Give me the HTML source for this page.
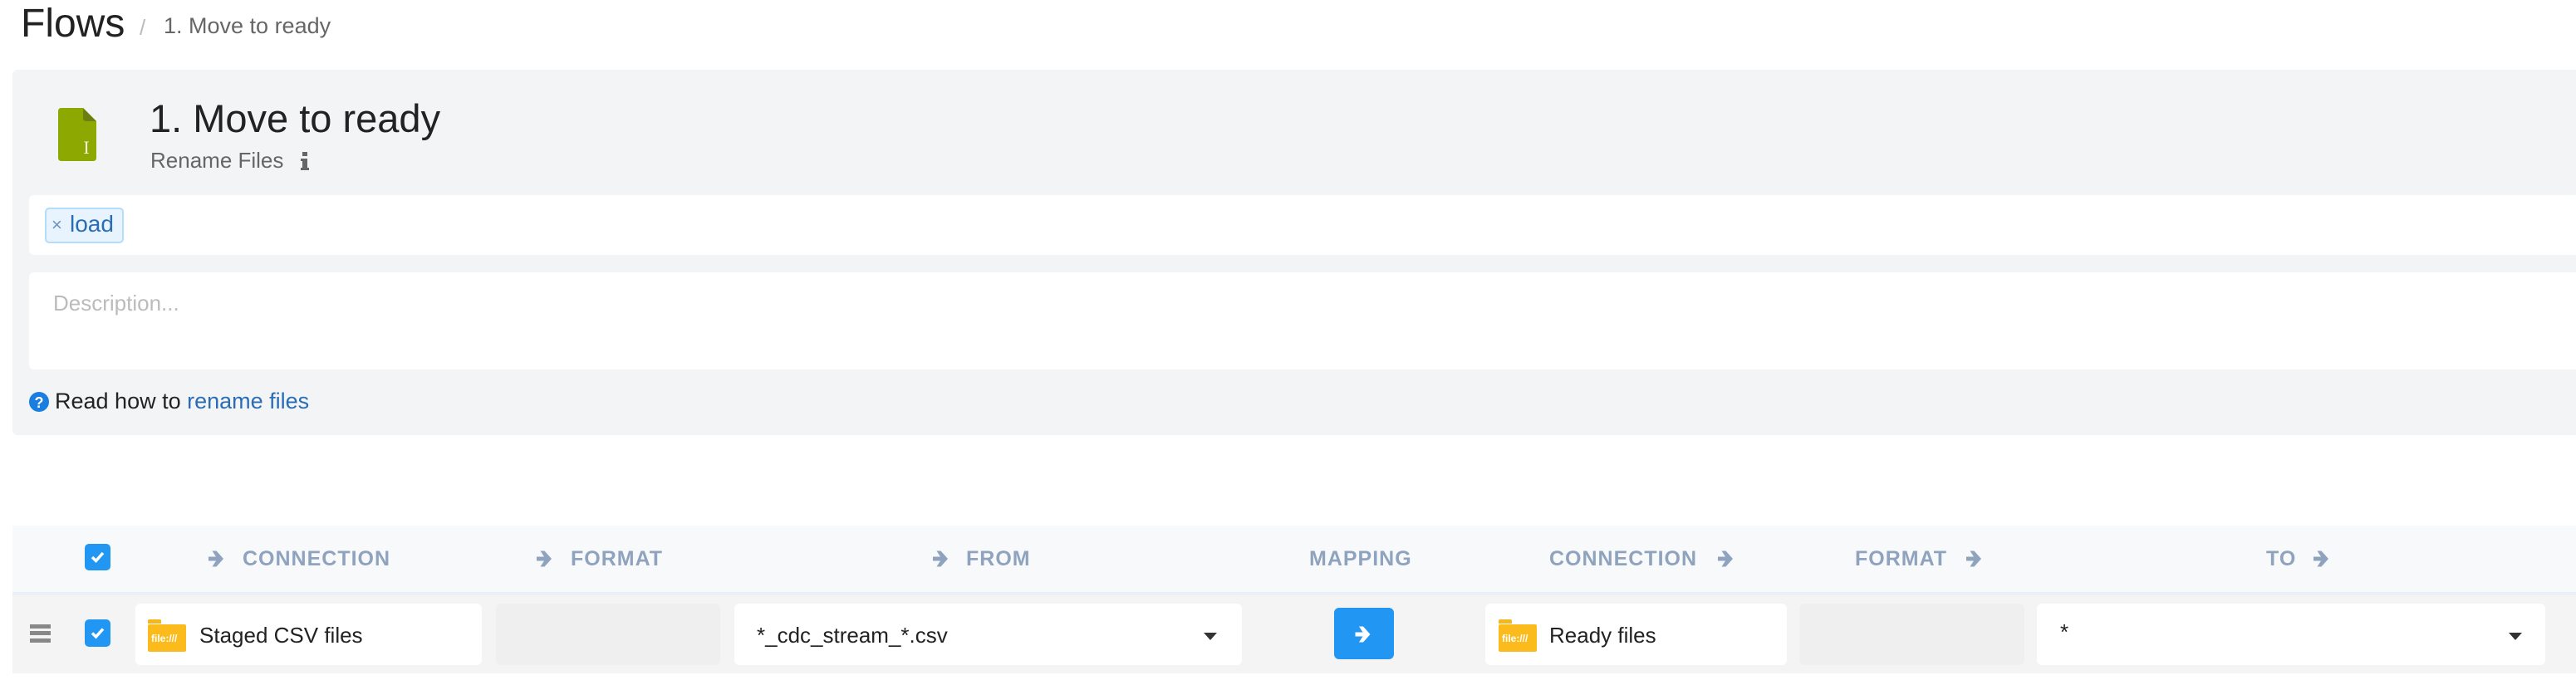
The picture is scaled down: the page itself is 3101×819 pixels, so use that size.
<!DOCTYPE html>
<html><head><meta charset="utf-8"><style>
*{margin:0;padding:0;box-sizing:border-box}
body{width:3101px;height:819px;overflow:hidden;background:#fff;font-family:"Liberation Sans",Arial,sans-serif;position:relative}
.a{position:absolute;white-space:nowrap}
.hd{font-weight:bold;font-size:25px;color:#8fa3bf;letter-spacing:1px;top:659px}
.box{position:absolute;background:#fff;border-radius:6px}
.gbox{position:absolute;background:#efefef;border-radius:6px}
</style></head><body>
<div class="a" style="left:25px;top:1px;font-size:48px;color:#222">Flows</div>
<div class="a" style="left:168px;top:18px;font-size:26px;color:#bbb">/</div>
<div class="a" style="left:197px;top:16px;font-size:27px;color:#666">1. Move to ready</div>

<div style="position:absolute;left:15px;top:84px;width:3086px;height:440px;background:#f3f4f6;border-radius:6px 0 0 6px"></div>
<svg class="a" style="left:70px;top:130px" width="46" height="64" viewBox="0 0 46 64">
<path d="M4 0H30L46 16V60Q46 64 42 64H4Q0 64 0 60V4Q0 0 4 0Z" fill="#8da800"/>
<path d="M30 0L46 16H34Q30 16 30 12Z" fill="#6a7e12"/>
<text x="34" y="55" font-family="Liberation Serif,serif" font-size="22" fill="#f3f7de" text-anchor="middle">I</text>
</svg>
<div class="a" style="left:180px;top:115px;font-size:47px;color:#222">1. Move to ready</div>
<div class="a" style="left:181px;top:178px;font-size:26px;color:#666">Rename Files</div>
<svg class="a" style="left:361px;top:183px" width="12" height="22" viewBox="0 0 12 22"><rect x="3" y="0" width="6" height="5" fill="#666"/><path d="M1 8H9V19H11V22H1V19H3V11H1Z" fill="#666"/></svg>

<div class="box" style="left:35px;top:235px;width:3066px;height:72px;border-radius:6px 0 0 6px"></div>
<div class="a" style="left:54px;top:250px;width:95px;height:43px;background:#e8f4fd;border:2px solid #b5dcf8;border-radius:5px"></div>
<div class="a" style="left:62px;top:255px;font-size:22px;color:#6d93c0;line-height:32px">×</div>
<div class="a" style="left:84px;top:253px;font-size:28px;color:#2a6db5;line-height:34px">load</div>

<div class="box" style="left:35px;top:328px;width:3066px;height:117px;border-radius:6px 0 0 6px"></div>
<div class="a" style="left:64px;top:350px;font-size:26px;color:#bbb">Description...</div>

<svg class="a" style="left:35px;top:472px" width="24" height="24" viewBox="0 0 24 24"><circle cx="12" cy="12" r="12" fill="#1a7ee0"/><text x="12" y="19" font-size="18" font-weight="bold" fill="#fff" text-anchor="middle" font-family="Liberation Sans,sans-serif">?</text></svg>
<div class="a" style="left:66px;top:468px;font-size:27px;color:#222">Read how to <span style="color:#2a6db5">rename files</span></div>

<div style="position:absolute;left:15px;top:633px;width:3086px;height:80px;background:#f8f9fb"></div>
<div style="position:absolute;left:15px;top:713px;width:3086px;height:4px;background:#e9eff6"></div>
<div style="position:absolute;left:15px;top:717px;width:3086px;height:94px;background:#f4f4f4"></div>

<svg class="a" style="left:102px;top:655px" width="31" height="32" viewBox="0 0 31 32"><rect width="31" height="32" rx="5" fill="#2196f3"/><path d="M9 16l4.5 4.5L22 11" stroke="#fff" stroke-width="3.5" fill="none"/></svg>

<svg width="0" height="0" style="position:absolute"><defs><symbol id="ar" viewBox="0 0 22 24"><path d="M2 9.5H11L6.5 2.5H11.5L20 12L11.5 21.5H6.5L11 14.5H2Z" fill="currentColor"/></symbol></defs></svg>
<svg class="a" style="left:249px;top:661px;color:#8fa3bf" width="22" height="24"><use href="#ar"/></svg>
<div class="a hd" style="left:292px">CONNECTION</div>
<svg class="a" style="left:644px;top:661px;color:#8fa3bf" width="22" height="24"><use href="#ar"/></svg>
<div class="a hd" style="left:687px">FORMAT</div>
<svg class="a" style="left:1121px;top:661px;color:#8fa3bf" width="22" height="24"><use href="#ar"/></svg>
<div class="a hd" style="left:1163px">FROM</div>
<div class="a hd" style="left:1576px">MAPPING</div>
<div class="a hd" style="left:1865px">CONNECTION</div>
<svg class="a" style="left:2066px;top:661px;color:#8fa3bf" width="22" height="24"><use href="#ar"/></svg>
<div class="a hd" style="left:2233px">FORMAT</div>
<svg class="a" style="left:2365px;top:661px;color:#8fa3bf" width="22" height="24"><use href="#ar"/></svg>
<div class="a hd" style="left:2728px">TO</div>
<svg class="a" style="left:2783px;top:661px;color:#8fa3bf" width="22" height="24"><use href="#ar"/></svg>

<div class="a" style="left:36px;top:752px;width:25px;height:5px;background:#888"></div>
<div class="a" style="left:36px;top:760px;width:25px;height:5px;background:#888"></div>
<div class="a" style="left:36px;top:769px;width:25px;height:5px;background:#888"></div>
<svg class="a" style="left:102px;top:746px" width="31" height="33" viewBox="0 0 31 33"><rect width="31" height="33" rx="5" fill="#2196f3"/><path d="M9 16.5l4.5 4.5L22 11.5" stroke="#fff" stroke-width="3.5" fill="none"/></svg>

<svg width="0" height="0" style="position:absolute"><defs><symbol id="fd" viewBox="0 0 46 39"><path d="M0 2Q0 0 2 0H14Q16 0 16 2V5H0Z" fill="#f4b81a"/><rect x="0" y="6" width="46" height="33" rx="2" fill="#fbbb1c"/><text x="4" y="27" font-size="12" font-weight="bold" fill="#fff" font-family="Liberation Sans,sans-serif">file:///</text></symbol></defs></svg>

<div class="box" style="left:163px;top:727px;width:417px;height:74px"></div>
<svg class="a" style="left:178px;top:746px" width="46" height="39"><use href="#fd"/></svg>
<div class="a" style="left:240px;top:750px;font-size:26px;color:#222">Staged CSV files</div>
<div class="gbox" style="left:597px;top:727px;width:270px;height:74px"></div>
<div class="box" style="left:884px;top:727px;width:611px;height:74px"></div>
<div class="a" style="left:911px;top:750px;font-size:26px;color:#222">*_cdc_stream_*.csv</div>
<div class="a" style="left:1449px;top:762px;width:0;height:0;border-left:8px solid transparent;border-right:8px solid transparent;border-top:9px solid #333"></div>

<div class="a" style="left:1606px;top:732px;width:72px;height:62px;background:#2196f3;border-radius:6px"></div>
<svg class="a" style="left:1628px;top:752px;color:#fff" width="25" height="24"><use href="#ar"/></svg>

<div class="box" style="left:1788px;top:727px;width:363px;height:74px"></div>
<svg class="a" style="left:1804px;top:746px" width="46" height="39"><use href="#fd"/></svg>
<div class="a" style="left:1865px;top:750px;font-size:26px;color:#222">Ready files</div>
<div class="gbox" style="left:2166px;top:727px;width:271px;height:74px"></div>
<div class="box" style="left:2452px;top:727px;width:612px;height:74px"></div>
<div class="a" style="left:2480px;top:746px;font-size:26px;color:#222">*</div>
<div class="a" style="left:3020px;top:762px;width:0;height:0;border-left:8px solid transparent;border-right:8px solid transparent;border-top:9px solid #333"></div>
</body></html>
